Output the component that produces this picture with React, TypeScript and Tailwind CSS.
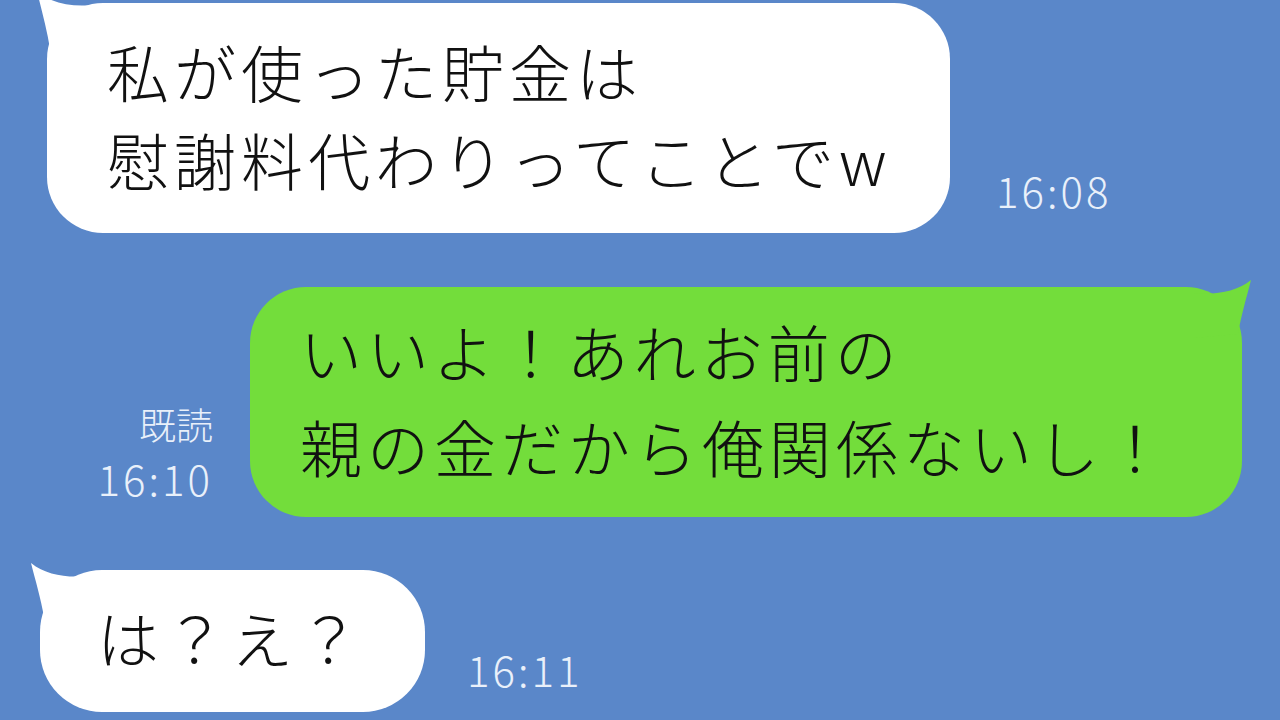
import React from "react";

const jp = { fontFamily: '"Noto Sans CJK JP", "Noto Sans", sans-serif' };

// little horn on the top corner of a bubble
const Tail: React.FC<{ color: string; side: "left" | "right"; high?: boolean }> = ({ color, side, high }) => (
  <svg
    viewBox="0 0 60 60"
    className={
      side === "left"
        ? high
          ? "absolute -left-[13px] -top-[14px] w-[60px] h-[64px]"
          : "absolute -left-[12px] -top-[9px] w-[60px] h-[60px]"
        : "absolute -right-[12px] -top-[9px] w-[60px] h-[60px] -scale-x-100"
    }
    preserveAspectRatio="none"
  >
    <path d="M3,2 C7,18 13,38 16,56 L60,60 L60,15 C38,17 18,14 3,2 Z" fill={color} />
  </svg>
);

const Time: React.FC<{ children: React.ReactNode }> = ({ children }) => (
  <div className="text-[42px] leading-none tracking-[3px] font-light text-[#e9f0fa]" style={jp}>
    {children}
  </div>
);

export default function App() {
  return (
    <div className="w-[1280px] h-[720px] bg-[#5a87c9] overflow-hidden flex flex-col font-light" style={jp}>
      {/* incoming */}
      <div className="flex items-end pl-[47px] pt-[3px]">
        <div className="relative w-[903px] h-[230px] bg-white rounded-[56px] pl-[60px] pt-[24px] text-[62px] leading-[88px] tracking-[5px] text-[#111] whitespace-nowrap">
          <Tail color="#ffffff" side="left" high />
          <div className="relative">私が使った貯金は</div>
          <div className="relative">慰謝料代わりってことでw</div>
        </div>
        <div className="ml-[46px] mb-[22px]">
          <Time>16:08</Time>
        </div>
      </div>

      {/* outgoing */}
      <div className="flex items-end justify-end pr-[38px] mt-[54px]">
        <div className="flex flex-col items-end mr-[37px] mb-[18px] gap-[14px]">
          <div className="text-[37px] leading-none text-[#e9f0fa]">既読</div>
          <Time>16:10</Time>
        </div>
        <div className="relative w-[992px] h-[230px] bg-[#73dd3b] rounded-[56px] pl-[50px] pt-[17px] text-[62px] leading-[95px] tracking-[5px] text-[#111] whitespace-nowrap">
          <Tail color="#73dd3b" side="right" />
          <div className="relative">いいよ！あれお前の</div>
          <div className="relative">親の金だから俺関係ないし！</div>
        </div>
      </div>

      {/* incoming */}
      <div className="flex items-end pl-[40px] mt-[53px]">
        <div className="relative w-[385px] h-[142px] bg-white rounded-[62px] pl-[57px] pt-[22px] text-[62px] leading-[90px] tracking-[5px] text-[#111] whitespace-nowrap">
          <Tail color="#ffffff" side="left" />
          <div className="relative">は？え？</div>
        </div>
        <div className="ml-[42px] mb-[22px]">
          <Time>16:11</Time>
        </div>
      </div>
    </div>
  );
}
